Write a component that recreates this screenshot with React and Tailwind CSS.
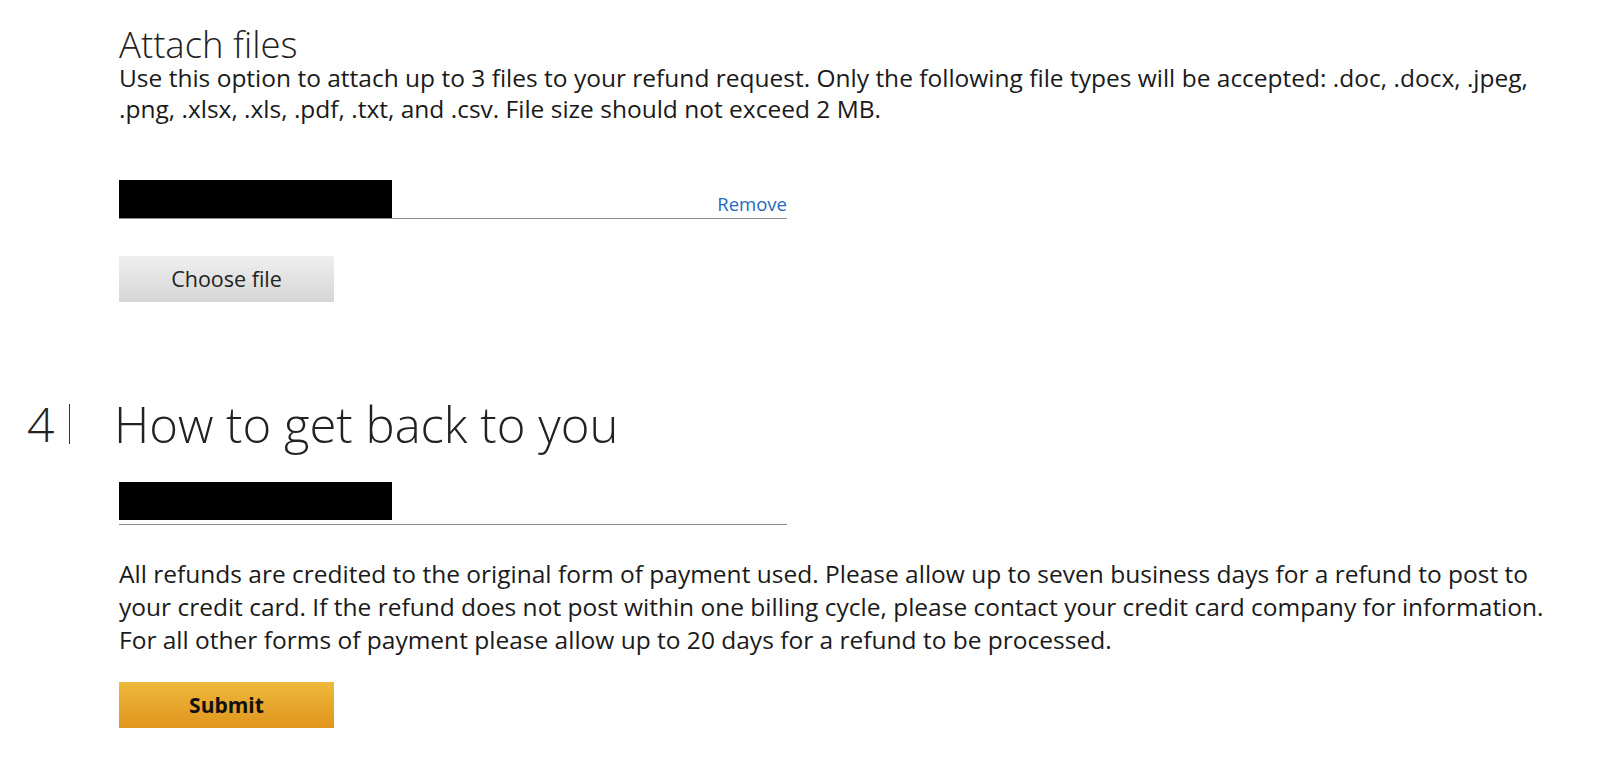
import React from 'react'

function Field({ right }) {
  return (
    <div className="flex items-end w-[668px] border-b border-[#8c8c8c]">
      <div className="w-[273px] h-[38px] bg-black" />
      {right}
    </div>
  )
}

function Btn({ children, className }) {
  return (
    <button className={`w-[215px] h-[46px] leading-none ${className}`}>{children}</button>
  )
}

export default function App() {
  return (
    <div className="min-h-screen bg-white text-[#1a1a1a] font-['Open_Sans',sans-serif]">
      <div className="pl-[119px] pt-[28px]">
        <h3 className="text-[36.5px] leading-[32px] font-light text-[#222]">Attach files</h3>
        <p className="mt-[2px] text-[24.5px] leading-[31px] whitespace-nowrap">
          Use this option to attach up to 3 files to your refund request. Only the following file types will be accepted: .doc, .docx, .jpeg,<br />
          .png, .xlsx, .xls, .pdf, .txt, and .csv. File size should not exceed 2 MB.
        </p>
        <div className="mt-[56px]">
          <Field right={<span className="ml-auto mb-[5px] text-[18.5px] leading-none text-[#1f6bbd]">Remove</span>} />
        </div>
        <Btn className="mt-[37px] text-[21.5px] text-[#222] bg-gradient-to-b from-[#efefef] to-[#d6d6d6]">Choose file</Btn>
      </div>

      <div className="flex items-center pl-[27px] mt-[94px] h-[56px] font-light text-[#222]">
        <span className="text-[48px] leading-[56px] w-[27px]">4</span>
        <span className="ml-[15px] w-px h-[40px] bg-[#333]" />
        <h2 className="ml-[44px] text-[49px] leading-[56px]">How to get back to you</h2>
      </div>

      <div className="pl-[119px]">
        <div className="mt-[30px] flex flex-col w-[668px] border-b border-[#8c8c8c] pb-[4px]">
          <div className="w-[273px] h-[38px] bg-black" />
        </div>
        <p className="mt-[32px] text-[24.5px] leading-[33px] whitespace-nowrap">
          All refunds are credited to the original form of payment used. Please allow up to seven business days for a refund to post to<br />
          your credit card. If the refund does not post within one billing cycle, please contact your credit card company for information.<br />
          For all other forms of payment please allow up to 20 days for a refund to be processed.
        </p>
        <Btn className="mt-[26px] text-[21px] font-bold text-[#111] bg-gradient-to-b from-[#eeb93a] to-[#e0951c]">Submit</Btn>
      </div>
    </div>
  )
}
